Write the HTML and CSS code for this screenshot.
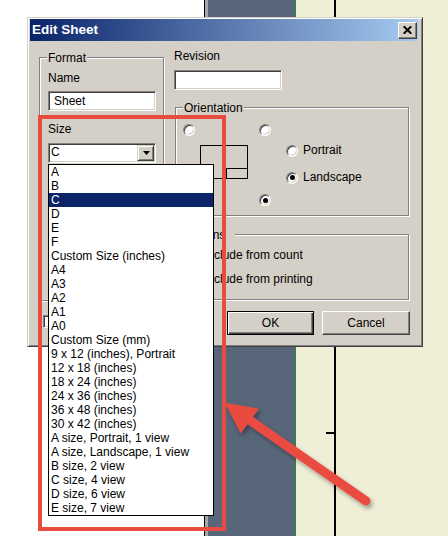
FILE: index.html
```html
<!DOCTYPE html>
<html>
<head>
<meta charset="utf-8">
<title>Edit Sheet</title>
<link rel="stylesheet" href="styles.css">
</head>
<body>
<div class="desktop">
  <div class="bg-white"></div>
  <div class="bg-black"></div>
  <div class="bg-edge"></div>
  <div class="bg-slate"></div>
  <div class="bg-green"></div>
  <div class="bg-cream"><div class="vline"></div></div>

  <div class="dialog">
    <div class="titlebar">
      <span class="title">Edit Sheet</span>
      <div class="close">
        <svg width="9" height="8" viewBox="0 0 9 8"><path d="M0.7 0.3 L8.3 7.7 M8.3 0.3 L0.7 7.7" stroke="#000" stroke-width="2" fill="none"/></svg>
      </div>
    </div>
    <div class="body">
      <div class="col-left">
        <div class="group format">
          <span class="legend">Format</span>
          <div class="label name-label">Name</div>
          <div class="textbox name-box">Sheet</div>
          <div class="label size-label">Size</div>
          <div class="combo">
            <span class="combo-value">C</span>
            <span class="combo-btn"><svg width="7" height="4" viewBox="0 0 7 4"><path d="M0 0 H7 L3.5 4 Z" fill="#000"/></svg></span>
            <ul class="dropdown">
              <li>A</li>
              <li>B</li>
              <li class="sel">C</li>
              <li>D</li>
              <li>E</li>
              <li>F</li>
              <li>Custom Size (inches)</li>
              <li>A4</li>
              <li>A3</li>
              <li>A2</li>
              <li>A1</li>
              <li>A0</li>
              <li>Custom Size (mm)</li>
              <li>9 x 12 (inches), Portrait</li>
              <li>12 x 18 (inches)</li>
              <li>18 x 24 (inches)</li>
              <li>24 x 36 (inches)</li>
              <li>36 x 48 (inches)</li>
              <li>30 x 42 (inches)</li>
              <li>A size, Portrait, 1 view</li>
              <li>A size, Landscape, 1 view</li>
              <li>B size, 2 view</li>
              <li>C size, 4 view</li>
              <li>D size, 6 view</li>
              <li>E size, 7 view</li>
            </ul>
          </div>
        </div>
        <div class="check left-check"></div>
      </div>

      <div class="col-right">
        <div class="label">Revision</div>
        <div class="textbox rev-box"></div>

        <div class="group orient">
          <span class="legend">Orientation</span>
          <div class="orient-body">
            <div class="corner-grid">
              <span class="radio"></span>
              <span></span>
              <span class="radio"></span>
              <span></span>
              <span class="paper">
                <svg width="48" height="34" viewBox="0 0 48 34"><rect x="0.5" y="0.5" width="47" height="33" fill="none" stroke="#000"/><rect x="26.5" y="23.5" width="21" height="10" fill="none" stroke="#000"/></svg>
              </span>
              <span></span>
              <span class="radio"></span>
              <span></span>
              <span class="radio on"></span>
            </div>
            <div class="orient-opts">
              <div class="opt"><span class="radio"></span><span class="opt-text">Portrait</span></div>
              <div class="opt opt2"><span class="radio on"></span><span class="opt-text">Landscape</span></div>
            </div>
          </div>
        </div>

        <div class="group options">
          <span class="legend legend-opt">Options</span>
          <div class="chk-row"><span class="check"></span><span class="chk-text">Exclude from count</span></div>
          <div class="chk-row chk-row2"><span class="check"></span><span class="chk-text">Exclude from printing</span></div>
        </div>

        <div class="buttons">
          <div class="btn btn-default">OK</div>
          <div class="btn btn-cancel">Cancel</div>
        </div>
      </div>
    </div>
  </div>

  <div class="annot-rect"></div>
  <svg class="annot-arrow" width="448" height="536" viewBox="0 0 448 536">
    <defs>
      <filter id="sh" x="-20%" y="-20%" width="140%" height="140%">
        <feDropShadow dx="2" dy="3" stdDeviation="2" flood-color="#000" flood-opacity="0.35"/>
      </filter>
    </defs>
    <g filter="url(#sh)" fill="#e94c3f" stroke="#e94c3f">
      <line x1="248" y1="419" x2="366" y2="501" stroke-width="9" stroke-linecap="round"/>
      <polygon points="225.7,403.3 258.3,409 240.7,432.7" stroke-width="1" stroke-linejoin="round"/>
    </g>
  </svg>
</div>
</body>
</html>
```

FILE: styles.css
```css
* { box-sizing: border-box; }
html, body { margin: 0; padding: 0; }
body {
  font-family: "Liberation Sans", Arial, sans-serif;
  font-size: 12px;
  line-height: 14px;
  color: #000;
  background: #fff;
}

/* desktop background */
.desktop {
  position: relative;
  width: 448px;
  height: 536px;
  overflow: hidden;
  display: flex;
}
.bg-white { width: 204px; background: #fff; }
.bg-black { width: 1px; background: #000; }
.bg-edge { width: 3px; background: #a3a8b0; }
.bg-slate { width: 87px; background: #58667a; }
.bg-green { width: 1px; background: #2e8b2e; }
.bg-cream { flex: 1; background: #efefd8; }
.vline {
  position: relative;
  margin-left: 38px;
  width: 2px;
  height: 100%;
  background: #000;
}
.vline::before {
  content: "";
  position: absolute;
  left: -8px;
  top: 432px;
  width: 8px;
  height: 2px;
  background: #000;
}

/* dialog window */
.dialog {
  position: absolute;
  left: 27px;
  top: 17px;
  width: 396px;
  height: 330px;
  background: #d4d0c8;
  border: 1px solid;
  border-color: #d4d0c8 #404040 #404040 #d4d0c8;
  box-shadow: inset 1px 1px 0 #fff, inset -1px -1px 0 #808080;
  padding: 1px 2px 0 2px;
}
.titlebar {
  height: 22px;
  margin-right: 2px;
  display: flex;
  align-items: center;
  padding-left: 2px;
  background: linear-gradient(to right, #0a246a, #a6caf0);
}
.title {
  font-weight: bold;
  font-size: 13.5px;
  line-height: 22px;
  color: #fff;
}
.close {
  margin-left: auto;
  margin-right: 1px;
  width: 19px;
  height: 17px;
  background: #d4d0c8;
  border: 1px solid;
  border-color: #fff #404040 #404040 #fff;
  box-shadow: inset -1px -1px 0 #808080;
  display: flex;
  align-items: center;
  justify-content: center;
}
.close svg { display: block; }

.body {
  display: flex;
  align-items: flex-start;
  padding-left: 9px;
}

/* group boxes */
.group {
  border: 1px solid #808080;
  box-shadow: inset 1px 1px 0 #fff, 1px 1px 0 #fff;
  padding-left: 8px;
  display: flex;
  flex-direction: column;
  align-items: flex-start;
}
.legend {
  margin: -7px 0 0 -1px;
  padding: 0 1px;
  background: #d4d0c8;
  white-space: nowrap;
}

/* left column */
.col-left {
  width: 125px;
  display: flex;
  flex-direction: column;
  align-items: flex-start;
}
.format {
  margin-top: 16px;
  width: 125px;
  height: 244px;
}
.name-label { margin-top: 6px; }
.textbox {
  width: 108px;
  height: 20px;
  background: #fff;
  border: 1px solid;
  border-color: #808080 #fff #fff #808080;
  box-shadow: inset 1px 1px 0 #404040, inset -1px -1px 0 #d4d0c8;
  padding: 2px 0 0 5px;
  white-space: nowrap;
}
.name-box { margin-top: 6px; }
.size-label { margin-top: 11px; }
.combo {
  position: relative;
  margin-top: 7px;
  width: 108px;
  height: 20px;
  background: #fff;
  border: 1px solid;
  border-color: #808080 #fff #fff #808080;
  box-shadow: inset 1px 1px 0 #404040, inset -1px -1px 0 #d4d0c8;
  display: flex;
  align-items: flex-start;
}
.combo-value {
  flex: 1;
  padding: 1px 0 0 2px;
}
.combo-btn {
  width: 17px;
  height: 16px;
  margin: 1px 1px 0 0;
  background: #d4d0c8;
  border: 1px solid;
  border-color: #d4d0c8 #404040 #404040 #d4d0c8;
  box-shadow: inset 1px 1px 0 #fff, inset -1px -1px 0 #808080;
  display: flex;
  align-items: center;
  justify-content: center;
}
.combo-btn svg { display: block; margin-left: 1px; }

.dropdown {
  position: absolute;
  z-index: 10;
  left: -1px;
  top: 20px;
  width: 166px;
  margin: 0;
  padding: 0;
  list-style: none;
  background: #fff;
  border: 1px solid #000;
}
.dropdown li {
  height: 14px;
  padding-left: 2px;
  white-space: nowrap;
}
.dropdown li.sel {
  background: #0a246a;
  color: #fff;
}

.check {
  width: 13px;
  height: 13px;
  background: #fff;
  border: 1px solid;
  border-color: #808080 #fff #fff #808080;
  box-shadow: inset 1px 1px 0 #404040, inset -1px -1px 0 #d4d0c8;
  flex: none;
}
.left-check {
  margin: 14px 0 0 4px;
}

/* right column */
.col-right {
  margin-left: 10px;
  width: 236px;
  padding-top: 8px;
  display: flex;
  flex-direction: column;
  align-items: flex-start;
}
.rev-box { margin-top: 7px; }

.orient {
  margin: 17px 0 0 1px;
  width: 234px;
  height: 109px;
}
.orient-body {
  display: flex;
  align-items: flex-start;
  margin: 9px 0 0 -1px;
}
.corner-grid {
  display: grid;
  grid-template-columns: 12px 64px 12px;
  grid-template-rows: 12px 58px 12px;
}
.paper {
  padding: 9px 0 0 5px;
}
.paper svg { display: block; }

.radio {
  width: 12px;
  height: 12px;
  border-radius: 50%;
  background: #fff;
  border: 1px solid;
  border-color: #808080 #fff #fff #808080;
  box-shadow: inset 1px 1px 0 #404040, inset -1px -1px 0 #d4d0c8;
  display: flex;
  align-items: center;
  justify-content: center;
  flex: none;
}
.radio.on::after {
  content: "";
  width: 5px;
  height: 5px;
  border-radius: 50%;
  background: #000;
}
.orient-opts {
  margin: 19px 0 0 15px;
  display: flex;
  flex-direction: column;
}
.opt {
  display: flex;
  align-items: flex-start;
  height: 14px;
}
.opt .radio { margin-top: 1.5px; }
.opt2 { margin-top: 13px; }
.opt-text { margin-left: 5px; white-space: nowrap; }

.options {
  margin: 18px 0 0 1px;
  width: 234px;
  height: 66px;
}
.legend-opt { padding-right: 10px; }
.chk-row {
  display: flex;
  align-items: flex-start;
  margin: 6px 0 0 -1px;
  height: 14px;
}
.chk-row .check { margin-top: 0.5px; }
.chk-row2 { margin-top: 10px; }
.chk-text { margin-left: 4px; white-space: nowrap; }

.buttons {
  align-self: stretch;
  margin-top: 11px;
  display: flex;
  justify-content: flex-end;
  gap: 8px;
}
.btn {
  height: 24px;
  background: #d4d0c8;
  text-align: center;
  padding-top: 4px;
}
.btn-default {
  width: 87px;
  border: 1px solid #000;
  box-shadow: inset 1px 1px 0 #fff, inset -1px -1px 0 #404040, inset -2px -2px 0 #808080;
}
.btn-cancel {
  width: 88px;
  border: 1px solid;
  border-color: #fff #404040 #404040 #fff;
  box-shadow: inset -1px -1px 0 #808080;
}

/* annotation overlay */
.annot-rect {
  position: absolute;
  z-index: 20;
  left: 38px;
  top: 115px;
  width: 188px;
  height: 416px;
  border: 4px solid #e94c3f;
}
.annot-arrow {
  position: absolute;
  z-index: 21;
  left: 0;
  top: 0;
  pointer-events: none;
}
```
